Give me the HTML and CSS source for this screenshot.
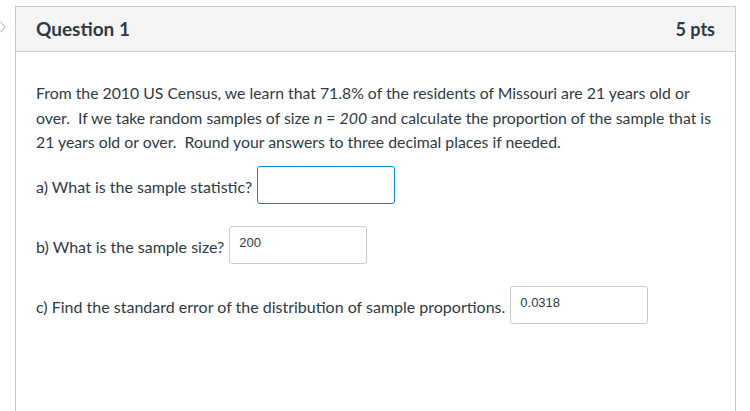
FILE: index.html
```html
<!DOCTYPE html>
<html>
<head>
<meta charset="utf-8">
<link rel="stylesheet" href="styles.css">
</head>
<body>
<div class="page">
  <div class="gutter">
    <svg class="chev" width="6" height="12" viewBox="0 0 6 12"><path d="M0.5 0.8 L5.2 6 L0.5 11.2" fill="none" stroke="#8fb3cc" stroke-width="1"/></svg>
  </div>
  <div class="card">
    <div class="header">
      <span class="title">Question 1</span>
      <span class="pts">5 pts</span>
    </div>
    <div class="body">
      <p class="text">From the 2010 US Census, we learn that 71.8% of the residents of Missouri are 21 years old or over.&nbsp; If we take random samples of size <i>n</i> = <i>200</i> and calculate the proportion of the sample that is 21 years old or over.&nbsp; Round your answers to three decimal places if needed.</p>
      <div class="row"><span class="label">a) What is the sample statistic?</span><input class="answer focus" type="text" value=""></div>
      <div class="row"><span class="label">b) What is the sample size?</span><input class="answer" type="text" value="200"></div>
      <div class="row"><span class="label">c) Find the standard error of the distribution of sample proportions.</span><input class="answer" type="text" value="0.0318"></div>
    </div>
  </div>
</div>
</body>
</html>
```
FILE: styles.css
```css
html, body {
  margin: 0;
  padding: 0;
  background: #fff;
  overflow: hidden;
}
.page {
  display: flex;
  height: 411px;
  font-family: Lato, "Liberation Sans", sans-serif;
  color: #2d3b45;
}
.gutter {
  width: 15px;
  padding-top: 21px;
  box-sizing: border-box;
}
.chev {
  display: block;
}
.card {
  margin-top: 6px;
  width: 721px;
  border: 1px solid #c7cdd1;
  border-bottom: none;
  box-sizing: border-box;
}
.header {
  height: 45px;
  box-sizing: border-box;
  background: #f5f5f5;
  border-bottom: 1px solid #c7cdd1;
  display: flex;
  align-items: center;
  justify-content: space-between;
  padding: 0 20px 1px 20px;
}
.title {
  font-weight: 700;
  font-size: 19px;
}
.pts {
  font-weight: 700;
  font-size: 18px;
  color: #2d3b45;
}
.body {
  padding: 29px 20px 0 20px;
}
.text {
  margin: 0;
  font-size: 15.8px;
  line-height: 24.5px;
}
.row {
  display: flex;
  align-items: center;
  font-size: 16px;
  margin-top: 22px;
}
.text + .row {
  margin-top: 11px;
}
.label {
  margin-right: 5px;
  padding-top: 4px;
}
.answer {
  width: 138px;
  height: 38px;
  box-sizing: border-box;
  border: 1px solid #c7cdd1;
  border-radius: 3px;
  padding: 0 9px 4px 9px;
  font-family: "Liberation Sans", Arial, sans-serif;
  font-size: 13px;
  color: #2d3b45;
  background: #fff;
  outline: none;
}
.answer.focus {
  border-color: #0a8ad6;
}
```
